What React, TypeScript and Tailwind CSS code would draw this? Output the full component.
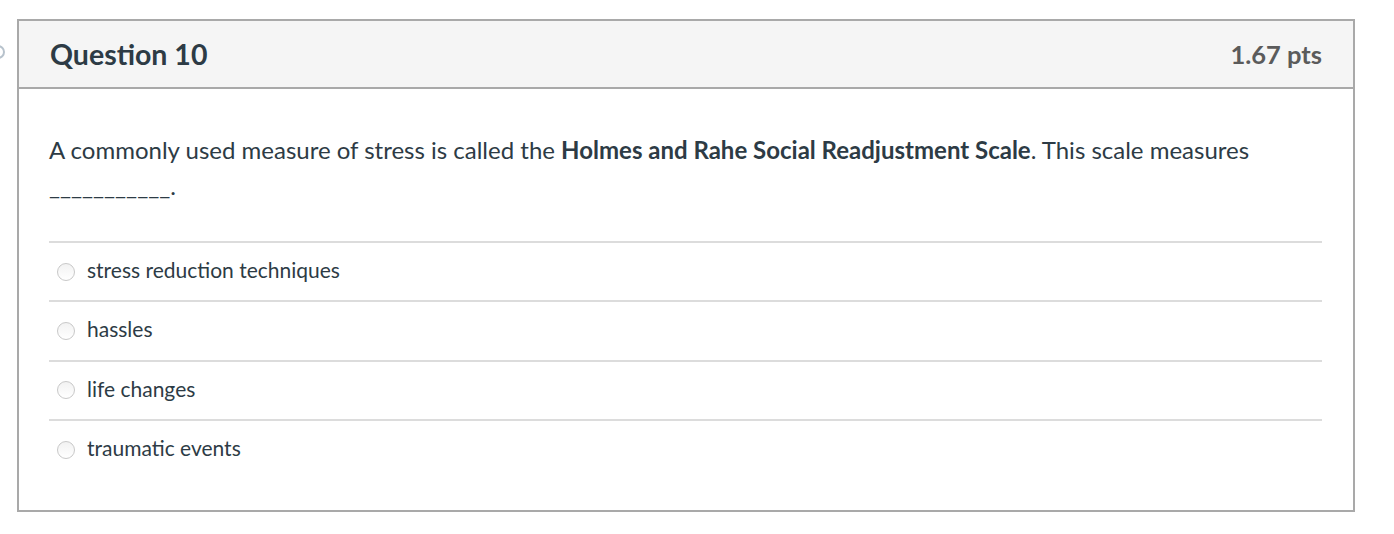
import React from "react";

const answers = ["stress reduction techniques", "hassles", "life changes", "traumatic events"];

function Radio() {
  return (
    <span className="block w-[18px] h-[18px] rounded-full border border-[#c8c8c8] bg-gradient-to-b from-[#f2f2f2] to-white shrink-0" />
  );
}

export default function App() {
  return (
    <div
      className="relative w-[1394px] h-[534px] bg-white overflow-hidden pt-[19px] pl-[17px]"
      style={{ fontFamily: "Lato, 'Open Sans', sans-serif" }}
    >
      <svg className="absolute left-0 top-[43px]" width="8" height="18" viewBox="0 0 8 18">
        <circle cx="-2" cy="9" r="6" fill="none" stroke="#b7c2cc" strokeWidth="2" />
      </svg>
      <div className="w-[1338px] border-2 border-[#a9a9a9]">
        <div className="h-[68px] bg-[#f5f5f5] border-b-2 border-[#a9a9a9] flex items-center justify-between pl-[31px] pr-[31px]">
          <span className="text-[28.5px] font-bold text-[#2d3b45]">Question 10</span>
          <span className="text-[25.5px] font-bold text-[#5b5b5b]">1.67 pts</span>
        </div>
        <div className="pl-[30px] pr-[31px] pt-[43px] pb-[32px]">
          <p className="text-[24px] leading-[36px] text-[#2d3b45]">
            A commonly used measure of stress is called the{" "}
            <strong className="font-bold">Holmes and Rahe Social Readjustment Scale</strong>. This scale measures
            <br />
            ___________.
          </p>
          <div className="mt-[37px]">
            {answers.map((a) => (
              <div key={a} className="h-[59.3px] border-t-2 border-[#dcdcdc] flex items-center pl-[8px] gap-[12px]">
                <Radio />
                <span className="text-[21px] leading-[25px] text-[#2d3b45] -mt-[4px]">{a}</span>
              </div>
            ))}
          </div>
        </div>
      </div>
    </div>
  );
}
